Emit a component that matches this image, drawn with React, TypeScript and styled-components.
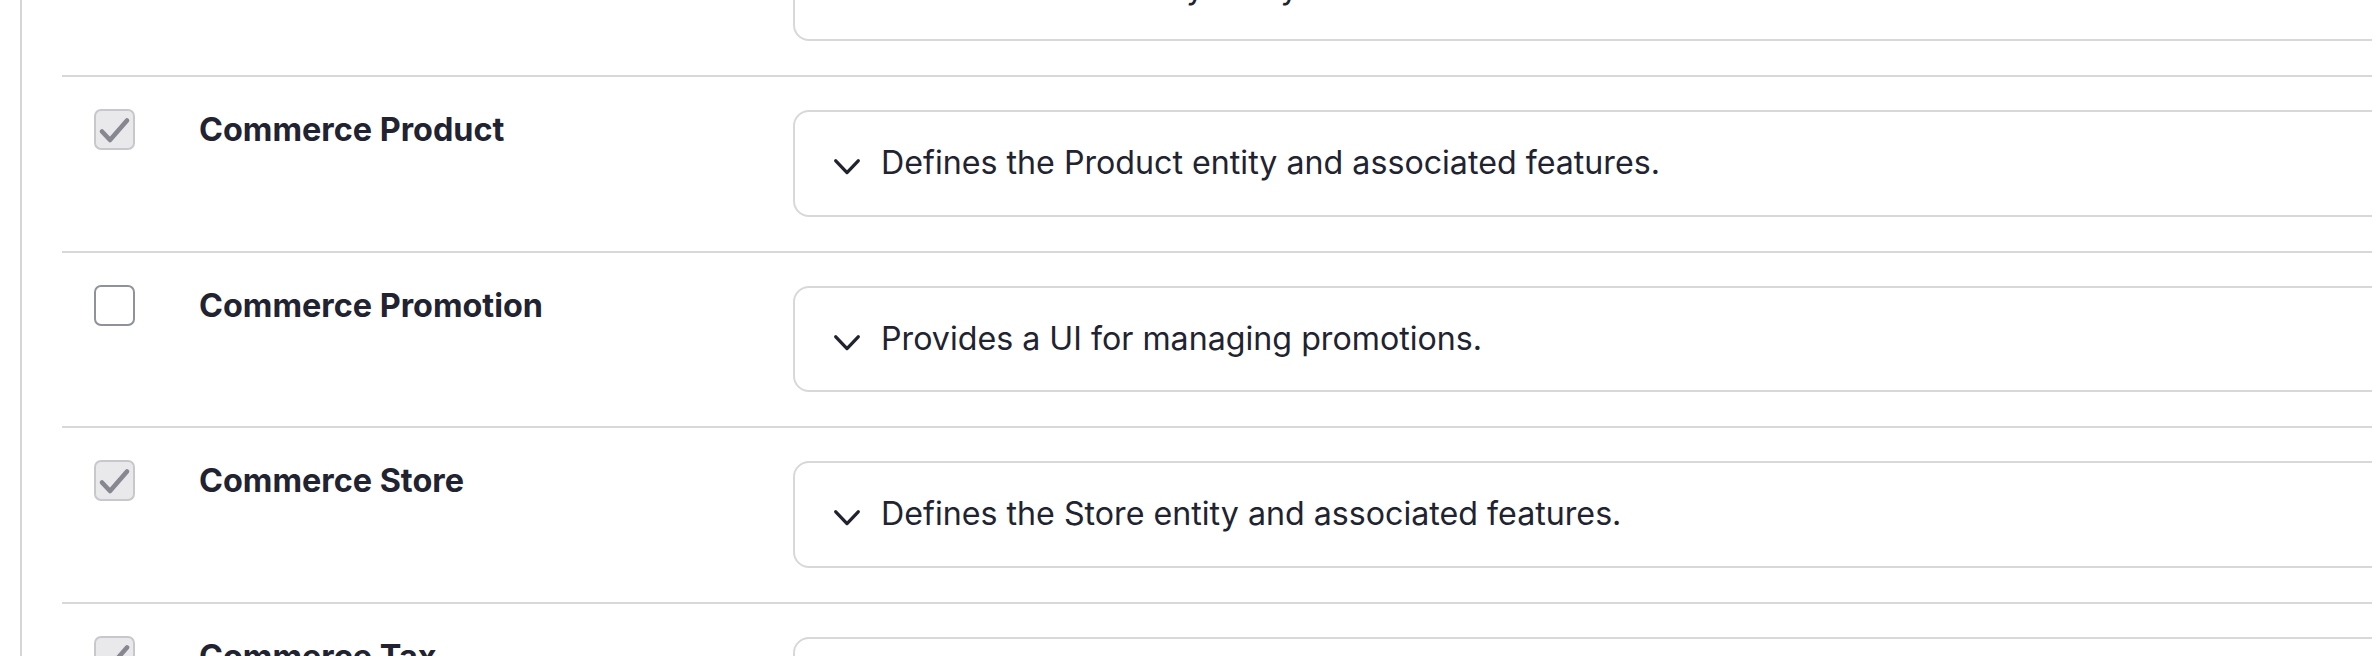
import React from "react";
import styled, { createGlobalStyle } from "styled-components";

const GlobalStyle = createGlobalStyle`
  html, body {
    margin: 0;
    padding: 0;
    background: #ffffff;
    overflow: hidden;
  }
  body {
    font-family: Inter, "Noto Sans", "Liberation Sans", sans-serif;
    color: #222330;
    -webkit-font-smoothing: antialiased;
  }
`;

const Page = styled.div`
  height: 656px;
  padding-left: 20px;
  overflow: hidden;
`;

const Fieldset = styled.div`
  height: 100%;
  border-left: 2px solid #d6d6d6;
  padding-left: 40px;
  overflow: hidden;
`;

const ModuleList = styled.div`
  width: calc(100% + 120px);
  margin-top: -100.5px;
  display: flex;
  flex-direction: column;
`;

const Row = styled.div`
  display: grid;
  grid-template-columns: 137px 594px 1fr;
  align-items: start;
  border-top: 2px solid #d8d8d8;
  padding: 33px 0 33.75px;
`;

const CheckCell = styled.div`
  padding-left: 32px;
`;

const Checkbox = styled.span<{ $checked: boolean }>`
  display: flex;
  align-items: center;
  justify-content: center;
  box-sizing: border-box;
  width: 41px;
  height: 41px;
  margin-top: -1px;
  border-radius: 7px;
  border: 2px solid ${(p) => (p.$checked ? "#c8c8cc" : "#8f929b")};
  background: ${(p) => (p.$checked ? "#e9e9eb" : "#ffffff")};
`;

const Title = styled.div`
  padding-top: 1px;
  font-size: 32.4px;
  line-height: 38.75px;
  font-weight: 700;
  color: #222330;
  white-space: nowrap;
`;

const DescBox = styled.div`
  display: flex;
  align-items: flex-start;
  gap: 21px;
  border: 2px solid #d8d8d8;
  border-radius: 16px;
  padding: 32px 0 32px 39px;
`;

const Chevron = styled.svg`
  flex: none;
  margin-top: 15px;
`;

const DescText = styled.div`
  font-size: 32.2px;
  line-height: 38.75px;
  font-weight: 400;
  color: #222330;
  white-space: nowrap;
`;

type Module = { name: string; description: string; checked: boolean };

const modules: Module[] = [
  { name: "Commerce Price", description: "Defines the Currency entity and the Price field.", checked: true },
  { name: "Commerce Product", description: "Defines the Product entity and associated features.", checked: true },
  { name: "Commerce Promotion", description: "Provides a UI for managing promotions.", checked: false },
  { name: "Commerce Store", description: "Defines the Store entity and associated features.", checked: true },
  { name: "Commerce Tax", description: "Provides tax functionality.", checked: true },
];

const CheckMark = () => (
  <svg width="37" height="37" viewBox="0 0 37 37" aria-hidden="true">
    <polyline
      points="6,20.5 14,29 31,9.5"
      fill="none"
      stroke="#878791"
      strokeWidth="4.6"
      strokeLinecap="round"
      strokeLinejoin="round"
    />
  </svg>
);

const ChevronDown = () => (
  <Chevron width="26" height="16" viewBox="0 0 26 16" aria-hidden="true">
    <polyline
      points="1.8,1.8 13,13.6 24.2,1.8"
      fill="none"
      stroke="#222330"
      strokeWidth="3.3"
      strokeLinecap="round"
      strokeLinejoin="round"
    />
  </Chevron>
);

export default function App() {
  return (
    <>
      <GlobalStyle />
      <Page>
        <Fieldset>
          <ModuleList>
            {modules.map((m) => (
              <Row key={m.name}>
                <CheckCell>
                  <Checkbox $checked={m.checked} role="checkbox" aria-checked={m.checked}>
                    {m.checked && <CheckMark />}
                  </Checkbox>
                </CheckCell>
                <Title>{m.name}</Title>
                <DescBox>
                  <ChevronDown />
                  <DescText>{m.description}</DescText>
                </DescBox>
              </Row>
            ))}
          </ModuleList>
        </Fieldset>
      </Page>
    </>
  );
}
